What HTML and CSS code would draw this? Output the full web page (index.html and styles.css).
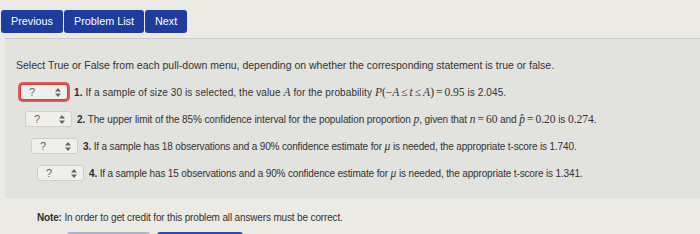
FILE: index.html
```html
<!DOCTYPE html>
<html>
<head>
<meta charset="utf-8">
<link rel="stylesheet" href="styles.css">
</head>
<body>
<div class="page">
  <nav class="nav">
    <button class="btn">Previous</button>
    <button class="btn">Problem List</button>
    <button class="btn">Next</button>
  </nav>
  <section class="panel">
    <p class="intro">Select True or False from each pull-down menu, depending on whether the corresponding statement is true or false.</p>
    <div class="rows">
      <div class="row r1">
        <span class="sel sel-error"><span class="q">?</span><svg class="arr" width="6" height="9" viewBox="0 0 6 9"><path d="M3 0 L6 3.5 L0 3.5 Z M0 5.5 L6 5.5 L3 9 Z" fill="#666"/></svg></span>
        <span class="txt"><b>1.</b> If a sample of size 30 is selected, the value <i class="m">A</i> for the probability <span class="m"><i>P</i>(−<i>A</i><span class="op">≤</span><i>t</i><span class="op">≤</span><i>A</i>)<span class="op">=</span>0.95</span> is 2.045.</span>
      </div>
      <div class="row r2">
        <span class="sel"><span class="q">?</span><svg class="arr" width="6" height="9" viewBox="0 0 6 9"><path d="M3 0 L6 3.5 L0 3.5 Z M0 5.5 L6 5.5 L3 9 Z" fill="#666"/></svg></span>
        <span class="txt"><b>2.</b> The upper limit of the 85% confidence interval for the population proportion <i class="m">p</i>, given that <span class="m"><i>n</i><span class="op">=</span>60</span> and <span class="m"><i>p̂</i><span class="op">=</span>0.20</span> is <span class="m">0.274</span>.</span>
      </div>
      <div class="row r3">
        <span class="sel"><span class="q">?</span><svg class="arr" width="6" height="9" viewBox="0 0 6 9"><path d="M3 0 L6 3.5 L0 3.5 Z M0 5.5 L6 5.5 L3 9 Z" fill="#666"/></svg></span>
        <span class="txt"><b>3.</b> If a sample has 18 observations and a 90% confidence estimate for <i class="m">μ</i> is needed, the appropriate t-score is 1.740.</span>
      </div>
      <div class="row r4">
        <span class="sel"><span class="q">?</span><svg class="arr" width="6" height="9" viewBox="0 0 6 9"><path d="M3 0 L6 3.5 L0 3.5 Z M0 5.5 L6 5.5 L3 9 Z" fill="#666"/></svg></span>
        <span class="txt"><b>4.</b> If a sample has 15 observations and a 90% confidence estimate for <i class="m">μ</i> is needed, the appropriate t-score is 1.341.</span>
      </div>
    </div>
  </section>
  <p class="note"><b>Note:</b> In order to get credit for this problem all answers must be correct.</p>
  <div class="foot">
    <span class="fbtn fbtn-light"></span>
    <span class="fbtn fbtn-dark"></span>
  </div>
</div>
</body>
</html>
```

FILE: styles.css
```css
html, body {
  margin: 0;
  padding: 0;
  background: #ebeae5;
  overflow: hidden;
}
.page {
  width: 700px;
  height: 234px;
  overflow: hidden;
  font-family: "Liberation Sans", Arial, sans-serif;
  color: #333;
}
.nav {
  display: flex;
  gap: 1px;
  padding: 10px 0 0 1px;
}
.btn {
  height: 23px;
  padding: 0 10px;
  border: none;
  border-radius: 3px;
  background: #1e3c9e;
  color: #fff;
  font-family: "Liberation Sans", Arial, sans-serif;
  font-size: 10.8px;
  line-height: 23px;
}
.panel {
  margin: 5px 0 0 5px;
  padding: 19px 0 15px 11px;
  background: #e2e2de;
  border-top: 1px solid #cacac6;
}
.intro {
  margin: 0;
  font-size: 10.5px;
  line-height: 14px;
}
.rows {
  display: flex;
  flex-direction: column;
  gap: 7px;
  margin-top: 10px;
}
.row {
  display: flex;
  align-items: center;
  height: 20px;
  font-size: 10px;
  letter-spacing: -0.15px;
}
.r1 { margin-left: 4px; letter-spacing: 0.1px; }
.r2 { margin-left: 9px; letter-spacing: -0.1px; }
.r3 { margin-left: 15px; }
.r4 { margin-left: 21px; }
.sel {
  box-sizing: border-box;
  width: 47px;
  height: 16px;
  display: flex;
  align-items: center;
  justify-content: space-between;
  padding: 0 6px 0 8px;
  border: 1px solid #cfcfcb;
  border-radius: 3px;
  background: #efefec;
  color: #666;
  font-size: 11px;
  letter-spacing: 0;
  margin-right: 5px;
}
.sel-error {
  width: 48px;
  border: 1px solid #d23f3f;
  box-shadow: 0 0 0 2px #dc5a5a;
  margin-right: 6px;
}
.q { line-height: 14px; }
.arr { display: block; }
.txt b { font-weight: bold; color: #2e2e2e; }
.m {
  font-family: "Liberation Serif", "Times New Roman", serif;
  font-size: 11.5px;
  letter-spacing: 0;
}
.op { margin: 0 2px; }
.note {
  margin: 13px 0 0 37px;
  font-size: 10px;
  letter-spacing: -0.15px;
  line-height: 14px;
}
.note b { color: #2e2e2e; }
.foot {
  display: flex;
  gap: 7px;
  margin: 7px 0 0 67px;
}
.fbtn {
  display: block;
  height: 20px;
  border-radius: 3px;
}
.fbtn-light { width: 83px; background: #a7b4cf; }
.fbtn-dark { width: 86px; background: #2a4aa8; }
```
